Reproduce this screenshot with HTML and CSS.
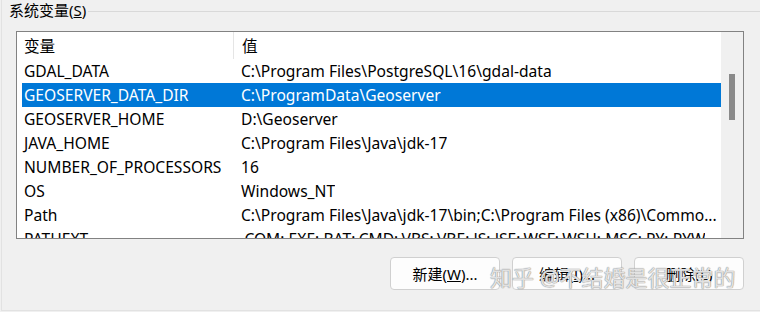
FILE: index.html
```html
<!DOCTYPE html>
<html lang="zh-CN">
<head>
  <meta charset="UTF-8" />
  <title>系统变量</title>
  <link rel="stylesheet" href="styles.css">
</head>
<body>
  <div class="group">
    <div class="caption"><span>系统变量(<u>S</u>)</span></div>

    <div class="list">
      <div class="list-main">
        <div class="list-head">
          <div class="col-name">变量</div>
          <div class="col-value">值</div>
        </div>
        <div class="row"><div class="col-name">GDAL_DATA</div><div class="col-value">C:\Program Files\PostgreSQL\16\gdal-data</div></div>
        <div class="row selected"><div class="col-name">GEOSERVER_DATA_DIR</div><div class="col-value">C:\ProgramData\Geoserver</div></div>
        <div class="row"><div class="col-name">GEOSERVER_HOME</div><div class="col-value">D:\Geoserver</div></div>
        <div class="row"><div class="col-name">JAVA_HOME</div><div class="col-value">C:\Program Files\Java\jdk-17</div></div>
        <div class="row"><div class="col-name">NUMBER_OF_PROCESSORS</div><div class="col-value">16</div></div>
        <div class="row"><div class="col-name">OS</div><div class="col-value">Windows_NT</div></div>
        <div class="row"><div class="col-name">Path</div><div class="col-value">C:\Program Files\Java\jdk-17\bin;C:\Program Files (x86)\Commo...</div></div>
        <div class="row"><div class="col-name">PATHEXT</div><div class="col-value">.COM;.EXE;.BAT;.CMD;.VBS;.VBE;.JS;.JSE;.WSF;.WSH;.MSC;.PY;.PYW</div></div>
      </div>
      <div class="scrollbar"><div class="thumb"></div></div>
    </div>

    <div class="buttons">
      <button class="btn">新建(<u>W</u>)...</button>
      <button class="btn">编辑(<u>I</u>)...</button>
      <button class="btn">删除(<u>L</u>)</button>
    </div>
  </div>

  <div class="watermark">知乎 @不结婚是很正常的</div>
</body>
</html>
```

FILE: styles.css
```css
html, body {
  margin: 0;
  height: 312px;
  overflow: hidden;
}
body {
  background-color: #f0f0f0;
  color: #000;
  font-family: "Noto Sans", "Noto Sans CJK SC", sans-serif;
  font-size: 15px;
  position: relative;
}
.group {
  height: 311px;
  border-left: 1px solid #e2e2e2;
  border-bottom: 1px solid #e2e2e2;
  margin-left: 1px;
  box-sizing: border-box;
}
.caption {
  display: flex;
  align-items: center;
  height: 21px;
  padding-left: 7px;
}
.caption span {
  line-height: 21px;
  padding-right: 2px;
}
.caption::after {
  content: "";
  flex: 1;
  height: 1px;
  background-color: #d9d9d9;
  margin-top: 1px;
}
.list {
  display: flex;
  width: 728px;
  height: 208px;
  margin: 10px 0 0 14px;
  border: 1px solid #828282;
  box-sizing: border-box;
  background-color: #fff;
  overflow: hidden;
  font-size: 15.6px;
}
.list-main {
  flex: 1;
  overflow: hidden;
}
.list-head, .row {
  display: flex;
  white-space: nowrap;
}
.list-head {
  height: 27px;
  line-height: 29px;
  padding-left: 5px;
}
.list-head .col-name {
  width: 209px;
  border-right: 1px solid #e5e5e5;
}
.row {
  height: 24px;
  line-height: 25px;
  margin-left: 5px;
}
.col-name {
  width: 210px;
  padding-left: 2px;
  flex-shrink: 0;
}
.col-value {
  padding-left: 7px;
  overflow: hidden;
}
.list-head .col-value {
  padding-left: 8px;
}
.row.selected {
  background-color: #0078d7;
  color: #fff;
}
.scrollbar {
  width: 22px;
  background-color: #f0f0f0;
}
.thumb {
  width: 6px;
  height: 46px;
  margin: 42px 0 0 8px;
  background-color: #8a8a8a;
}
.buttons {
  display: flex;
  justify-content: flex-end;
  gap: 12px;
  margin: 18px 16px 0 0;
}
.btn {
  width: 110px;
  height: 33px;
  font: inherit;
  color: #000;
  background-color: #fdfdfd;
  border: 1px solid #d0d0d0;
  border-radius: 4px;
}
.watermark {
  position: absolute;
  left: 490px;
  top: 260px;
  font-size: 22px;
  color: rgba(255, 255, 255, 0.75);
  text-shadow: 0 0 1px #888, 0 0 1px #888;
  white-space: nowrap;
}
```
